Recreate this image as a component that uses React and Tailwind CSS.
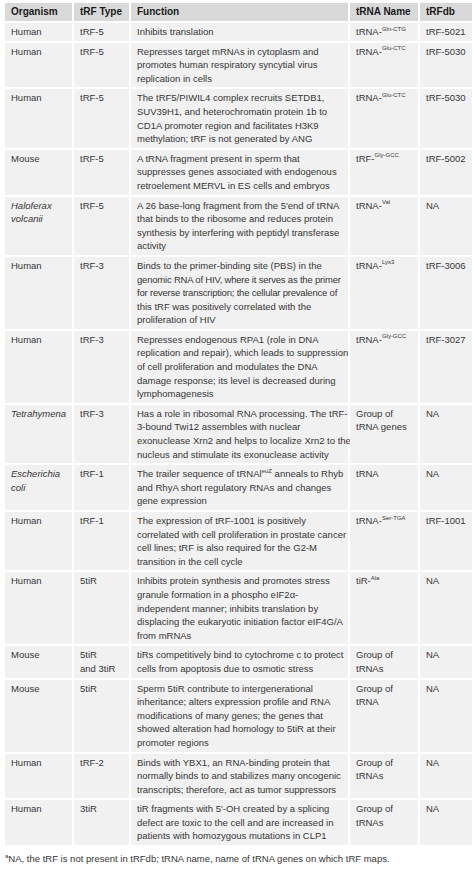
import React from "react";

const Sup = ({ children }) => (
  <sup className="text-[6px] top-[-4.5px] leading-none">{children}</sup>
);

const T = ({ children }) => <span className="tracking-[-0.2px]">{children}</span>;

const rows = [
  { org: ["Human"], type: ["tRF-5"], fn: ["Inhibits translation"], trna: [<>tRNA-<Sup>Gln-CTG</Sup></>], db: "tRF-5021" },
  { org: ["Human"], type: ["tRF-5"], fn: ["Represses target mRNAs in cytoplasm and", "promotes human respiratory syncytial virus", "replication in cells"], trna: [<>tRNA-<Sup>Glu-CTC</Sup></>], db: "tRF-5030" },
  { org: ["Human"], type: ["tRF-5"], fn: ["The tRF5/PIWIL4 complex recruits SETDB1,", "SUV39H1, and heterochromatin protein 1b to", "CD1A promoter region and facilitates H3K9", "methylation; tRF is not generated by ANG"], trna: [<>tRNA-<Sup>Glu-CTC</Sup></>], db: "tRF-5030" },
  { org: ["Mouse"], type: ["tRF-5"], fn: ["A tRNA fragment present in sperm that", "suppresses genes associated with endogenous", "retroelement MERVL in ES cells and embryos"], trna: [<>tRF-<Sup>Gly-GCC</Sup></>], db: "tRF-5002" },
  { org: ["Haloferax", "volcanii"], italic: true, type: ["tRF-5"], fn: ["A 26 base-long fragment from the 5′end of tRNA", "that binds to the ribosome and reduces protein", "synthesis by interfering with peptidyl transferase", "activity"], trna: [<>tRNA-<Sup>Val</Sup></>], db: "NA" },
  { org: ["Human"], type: ["tRF-3"], fn: ["Binds to the primer-binding site (PBS) in the", <T>genomic RNA of HIV, where it serves as the primer</T>, <T>for reverse transcription; the cellular prevalence of</T>, "this tRF was positively correlated with the", "proliferation of HIV"], trna: [<>tRNA-<Sup>Lys3</Sup></>], db: "tRF-3006" },
  { org: ["Human"], type: ["tRF-3"], fn: ["Represses endogenous RPA1 (role in DNA", "replication and repair), which leads to suppression", "of cell proliferation and modulates the DNA", "damage response; its level is decreased during", "lymphomagenesis"], trna: [<>tRNA-<Sup>Gly-GCC</Sup></>], db: "tRF-3027" },
  { org: ["Tetrahymena"], italic: true, type: ["tRF-3"], fn: ["Has a role in ribosomal RNA processing. The tRF-", "3-bound Twi12 assembles with nuclear", "exonuclease Xrn2 and helps to localize Xrn2 to the", "nucleus and stimulate its exonuclease activity"], trna: ["Group of", "tRNA genes"], db: "NA" },
  { org: ["Escherichia", "coli"], italic: true, type: ["tRF-1"], fn: [<>The trailer sequence of tRNAl<Sup>euZ</Sup> anneals to Rhyb</>, "and RhyA short regulatory RNAs and changes", "gene expression"], trna: ["tRNA"], db: "NA" },
  { org: ["Human"], type: ["tRF-1"], fn: ["The expression of tRF-1001 is positively", "correlated with cell proliferation in prostate cancer", "cell lines; tRF is also required for the G2-M", "transition in the cell cycle"], trna: [<>tRNA-<Sup>Ser-TGA</Sup></>], db: "tRF-1001" },
  { org: ["Human"], type: ["5tiR"], fn: ["Inhibits protein synthesis and promotes stress", "granule formation in a phospho eIF2α-", "independent manner; inhibits translation by", "displacing the eukaryotic initiation factor eIF4G/A", "from mRNAs"], trna: [<>tiR-<Sup>Ala</Sup></>], db: "NA" },
  { org: ["Mouse"], type: ["5tiR", "and 3tiR"], fn: ["tiRs competitively bind to cytochrome c to protect", "cells from apoptosis due to osmotic stress"], trna: ["Group of", "tRNAs"], db: "NA" },
  { org: ["Mouse"], type: ["5tiR"], fn: ["Sperm 5tiR contribute to intergenerational", "inheritance; alters expression profile and RNA", "modifications of many genes; the genes that", "showed alteration had homology to 5tiR at their", "promoter regions"], trna: ["Group of", "tRNA"], db: "NA" },
  { org: ["Human"], type: ["tRF-2"], fn: ["Binds with YBX1, an RNA-binding protein that", "normally binds to and stabilizes many oncogenic", "transcripts; therefore, act as tumor suppressors"], trna: ["Group of", "tRNAs"], db: "NA" },
  { org: ["Human"], type: ["3tiR"], fn: ["tiR fragments with 5′-OH created by a splicing", "defect are toxic to the cell and are increased in", "patients with homozygous mutations in CLP1"], trna: ["Group of", "tRNAs"], db: "NA" },
];

const Lines = ({ lines }) => (
  <>
    {lines.map((l, i) => (
      <div key={i} className="whitespace-nowrap">{l}</div>
    ))}
  </>
);

const H = ({ children }) => (
  <div className="bg-[#d9d9d9] px-[6px] py-[2px] text-[10px] leading-[14px] font-bold text-[#1a1a1a] whitespace-nowrap">
    {children}
  </div>
);

const C = ({ children, className = "" }) => (
  <div className={"bg-[#f1f1f1] px-[6px] py-[2px] " + className}>{children}</div>
);

export default function App() {
  return (
    <div className="w-[474px] h-[876px] bg-white font-['Liberation_Sans',Arial,sans-serif] text-[#363636] text-[9.5px] leading-[13.6px]">
      <div className="pl-[5px] pt-[3px]">
        <div className="grid grid-cols-[67px_55px_217px_68px_52px] gap-[2px]">
          <H>Organism</H>
          <H>tRF Type</H>
          <H>Function</H>
          <H>tRNA Name</H>
          <H>tRFdb</H>
          {rows.map((r, i) => (
            <React.Fragment key={i}>
              <C className={r.italic ? "italic" : ""}><Lines lines={r.org} /></C>
              <C><Lines lines={r.type} /></C>
              <C><Lines lines={r.fn} /></C>
              <C><Lines lines={r.trna} /></C>
              <C><div className="whitespace-nowrap">{r.db}</div></C>
            </React.Fragment>
          ))}
        </div>
      </div>
      <div className="pl-[5px] pt-[7px] whitespace-nowrap text-[9.5px]">
        <Sup>a</Sup>NA, the tRF is not present in tRFdb; tRNA name, name of tRNA genes on which tRF maps.
      </div>
    </div>
  );
}
